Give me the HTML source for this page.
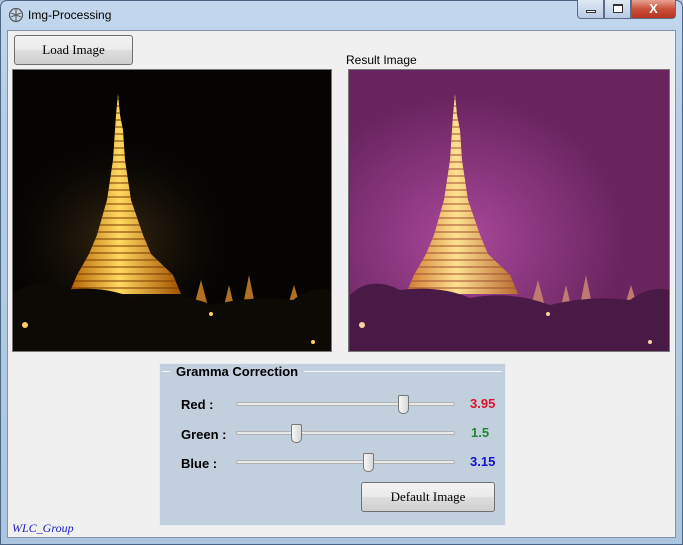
<!DOCTYPE html>
<html><head><style>
*{margin:0;padding:0;box-sizing:border-box}
body{width:683px;height:545px;overflow:hidden;background:#a9c3dd;font-family:"Liberation Sans",sans-serif;position:relative}
.frame{position:absolute;left:0;top:0;width:683px;height:545px;background:linear-gradient(180deg,#c3d8ee 0%,#b5cde6 20%,#adc6e0 100%);border-radius:7px 7px 0 0;border:1px solid #4d6585}
.title{position:absolute;left:28px;top:8px;font-size:12px;color:#000}
.client{position:absolute;left:7px;top:30px;width:669px;height:508px;background:#f0f0f0;border:1px solid #7f93ab}
.btn{position:absolute;border:1px solid #707070;border-radius:3px;background:linear-gradient(#f2f2f2 0%,#ebebeb 48%,#dddddd 52%,#cfcfcf 100%);font-family:"Liberation Serif",serif;font-size:13px;text-align:center;color:#000}
.img{position:absolute;border:1px solid #777;overflow:hidden}
.group{position:absolute;left:159px;top:363px;width:347px;height:163px;background:#c2cfdc;border:1px solid #e6ecf2}
.lbl{position:absolute;font-weight:bold;font-size:13px;color:#000}
.track{position:absolute;left:236px;width:219px;height:4px;background:#e7eaea;border:1px solid #b0b0b0;border-radius:2px}
.thumb{position:absolute;width:11px;height:19px;background:linear-gradient(90deg,#f6f6f6,#d8d8d8);border:1px solid #777;border-radius:2px 2px 5px 5px}
.val{position:absolute;font-weight:bold;font-size:13px}
.wb{position:absolute;top:0;height:19px;border:1px solid #5b6d86;border-top:none}
</style></head><body>
<div class="frame"></div>
<svg style="position:absolute;left:8px;top:7px" width="16" height="16" viewBox="0 0 16 16"><circle cx="8" cy="8" r="6.5" fill="none" stroke="#555" stroke-width="1.2"/><path d="M8 2v12M3 6q5 3 10 0M3 10q5-3 10 0" fill="none" stroke="#555"/></svg>
<div class="title">Img-Processing</div>
<div class="wb" style="left:577px;width:27px;background:linear-gradient(#dfe9f5,#b8cbe2);border-radius:0 0 0 4px"><div style="position:absolute;left:8px;top:10px;width:10px;height:3px;border:1px solid #333;background:#fff"></div></div>
<div class="wb" style="left:604px;width:27px;background:linear-gradient(#dfe9f5,#b8cbe2)"><div style="position:absolute;left:8px;top:4px;width:10px;height:9px;border:1px solid #333;border-top-width:2px;background:#fff"></div></div>
<div class="wb" style="left:631px;width:45px;background:linear-gradient(#e8a494,#c9503a 50%,#b8321f);border-radius:0 0 4px 0;color:#fff;font-weight:bold;font-size:13px;text-align:center;line-height:17px">X</div>
<div class="client">
<div class="btn" style="left:6px;top:4px;width:119px;height:30px;line-height:28px">Load Image</div>
<div style="position:absolute;left:338px;top:22px;font-size:12px">Result Image</div>
</div>

<div class="img" style="left:12px;top:69px;width:320px;height:283px;background:#050403">
<svg width="320" height="283" viewBox="0 0 320 283">
<defs><linearGradient id="g1" x1="0" x2="1"><stop offset="0" stop-color="#b06000"/><stop offset=".45" stop-color="#ffd860"/><stop offset="1" stop-color="#a05000"/></linearGradient>
<pattern id="s1" width="4" height="7" patternUnits="userSpaceOnUse"><rect width="4" height="2" fill="#7a3a00" opacity=".5"/></pattern>
<radialGradient id="h1" cx=".33" cy=".6" r=".4"><stop offset="0" stop-color="#3a2a10"/><stop offset="1" stop-color="#050403" stop-opacity="0"/></radialGradient></defs>
<rect width="320" height="283" fill="url(#h1)"/>
<g><path id="p" d="M105 24 L107 45 L110 60 L112 90 L118 130 L130 165 L138 184 L160 205 L168 224 L56 224 L64 205 L76 184 L84 165 L94 130 L100 90 L102 60 L103 45 Z" fill="url(#g1)"/>
<path d="M105 24 L107 45 L110 60 L112 90 L118 130 L130 165 L138 184 L160 205 L168 224 L56 224 L64 205 L76 184 L84 165 L94 130 L100 90 L102 60 L103 45 Z" fill="url(#s1)"/></g>
<path d="M180 240 l8-30 l8 30 M210 240 l6-25 l6 25 M230 235 l6-30 l6 30 M275 235 l6-20 l6 20" fill="#b07020"/>
<path d="M0 225 Q20 205 50 220 Q90 215 120 228 Q160 220 200 235 Q240 225 280 230 Q300 215 320 220 L320 283 L0 283Z" fill="#0d0904"/>
<circle cx="12" cy="255" r="3" fill="#ffcc66"/><circle cx="198" cy="244" r="2" fill="#ffcc66"/><circle cx="300" cy="272" r="2" fill="#ffcc66"/>
</svg></div>

<div class="img" style="left:348px;top:69px;width:322px;height:283px;background:#6a2560">
<svg width="322" height="283" viewBox="0 0 320 283">
<defs><linearGradient id="g2" x1="0" x2="1"><stop offset="0" stop-color="#d07a30"/><stop offset=".45" stop-color="#ffe090"/><stop offset="1" stop-color="#b86a30"/></linearGradient>
<pattern id="s2" width="4" height="7" patternUnits="userSpaceOnUse"><rect width="4" height="2" fill="#a05030" opacity=".5"/></pattern>
<radialGradient id="h2" cx=".35" cy=".6" r=".5"><stop offset="0" stop-color="#a8489a"/><stop offset="1" stop-color="#6a2560"/></radialGradient></defs>
<rect width="320" height="283" fill="url(#h2)"/>
<path d="M105 24 L107 45 L110 60 L112 90 L118 130 L130 165 L138 184 L160 205 L168 224 L56 224 L64 205 L76 184 L84 165 L94 130 L100 90 L102 60 L103 45 Z" fill="url(#g2)"/>
<path d="M105 24 L107 45 L110 60 L112 90 L118 130 L130 165 L138 184 L160 205 L168 224 L56 224 L64 205 L76 184 L84 165 L94 130 L100 90 L102 60 L103 45 Z" fill="url(#s2)"/>
<path d="M180 240 l8-30 l8 30 M210 240 l6-25 l6 25 M230 235 l6-30 l6 30 M275 235 l6-20 l6 20" fill="#c07a70"/>
<path d="M0 225 Q20 205 50 220 Q90 215 120 228 Q160 220 200 235 Q240 225 280 230 Q300 215 320 220 L320 283 L0 283Z" fill="#4a1a46"/>
<circle cx="12" cy="255" r="3" fill="#ffd0a0"/><circle cx="198" cy="244" r="2" fill="#ffd0a0"/><circle cx="300" cy="272" r="2" fill="#ffd0a0"/>
</svg></div>

<div class="group"></div>
<div style="position:absolute;left:162px;top:371px;width:340px;border-top:1px solid #f4f6f8"></div>
<div class="lbl" style="left:170px;top:364px;padding:0 6px;background:#c2cfdc">Gramma Correction</div>
<div class="lbl" style="left:181px;top:397px">Red :</div>
<div class="lbl" style="left:181px;top:427px">Green :</div>
<div class="lbl" style="left:181px;top:456px">Blue :</div>
<div class="track" style="top:402px"></div>
<div class="track" style="top:431px"></div>
<div class="track" style="top:460px"></div>
<div class="thumb" style="left:398px;top:395px"></div>
<div class="thumb" style="left:291px;top:424px"></div>
<div class="thumb" style="left:363px;top:453px"></div>
<div class="val" style="left:470px;top:396px;color:#e0102a">3.95</div>
<div class="val" style="left:471px;top:425px;color:#1a8a2a">1.5</div>
<div class="val" style="left:470px;top:454px;color:#1010d0">3.15</div>
<div class="btn" style="left:361px;top:482px;width:134px;height:30px;line-height:28px">Default Image</div>
<div style="position:absolute;left:12px;top:521px;font-family:'Liberation Serif',serif;font-style:italic;font-size:12px;color:#2020c0">WLC_Group</div>
</body></html>
